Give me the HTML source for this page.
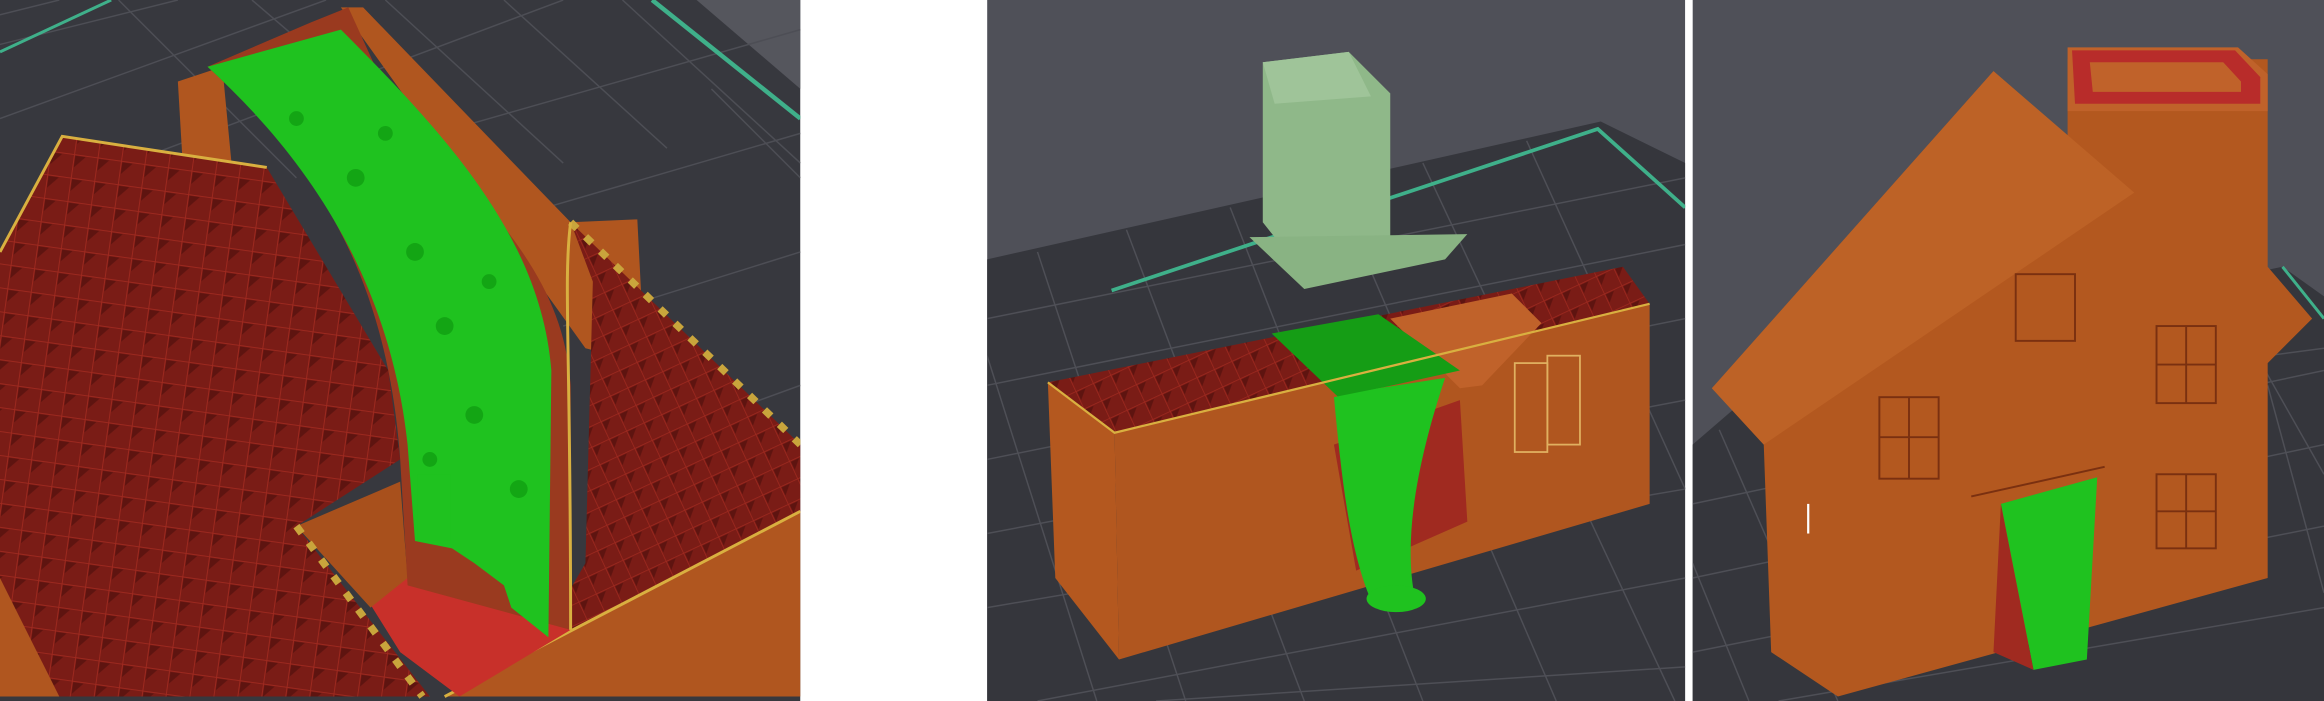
<!DOCTYPE html>
<html><head><meta charset="utf-8"><style>
html,body{margin:0;padding:0;background:#fff;}
svg{display:block;}
</style></head><body>
<svg width="2324" height="701" viewBox="0 0 1568 473" preserveAspectRatio="none" xmlns="http://www.w3.org/2000/svg">
<defs>
<clipPath id="c1"><rect x="0" y="0" width="540" height="473"/></clipPath>
<clipPath id="c2"><rect x="666" y="0" width="471" height="473"/></clipPath>
<clipPath id="c3"><rect x="1142" y="0" width="426" height="473"/></clipPath>
<pattern id="cells" width="16" height="16" patternUnits="userSpaceOnUse" patternTransform="rotate(8)">
<rect width="16" height="16" fill="#7a1c16"/><path d="M0 0H16M0 0V16" stroke="#a02a20" stroke-width="1.2"/>
<path d="M1 1L8 1L1 9Z" fill="#5e1410"/></pattern>
<pattern id="cells2" width="13" height="13" patternUnits="userSpaceOnUse" patternTransform="rotate(-25)">
<rect width="13" height="13" fill="#7a1c16"/><path d="M0 0H13M0 0V13" stroke="#a02a20" stroke-width="1"/>
<path d="M1 1L7 1L1 7Z" fill="#5e1410"/></pattern>
</defs>
<rect width="1568" height="473" fill="#fff"/>
<!-- Panel 1 -->
<g clip-path="url(#c1)">
<rect x="0" y="0" width="540" height="473" fill="#37383e"/>
<polygon points="470,0 540,0 540,60" fill="#55565d"/>
<g stroke="#4d4e55" stroke-width="1">
<path d="M0 30L120 0M0 80L220 0M60 120L380 0M260 100L540 20M300 160L540 90M380 220L540 170M430 300L540 260M0 10L40 0"/>
<path d="M80 0L200 120M170 0L240 60M260 0L380 110M340 0L450 100M420 0L540 110M480 60L540 120"/>
</g>
<path d="M440 0L540 80" stroke="#3fb08a" stroke-width="3"/>
<path d="M0 35L75 0" stroke="#3fb08a" stroke-width="2"/>
<polygon points="120,55 150,45 160,150 125,140" fill="#b0561f"/>
<polygon points="230,5 245,5 385,150 430,148 435,245 395,235" fill="#b0561f"/>
<polygon points="0,170 42,92 180,113 262,250 270,310 200,355 290,470 0,470" fill="url(#cells)"/>
<polyline points="0,170 42,92 180,113" fill="none" stroke="#d9b040" stroke-width="2"/>
<polygon points="385,150 540,300 540,345 360,440 395,380 400,190" fill="url(#cells2)"/>
<path d="M385 150L540 300" stroke="#c9a53c" stroke-width="5" stroke-dasharray="6 8"/>
<polygon points="540,345 300,470 540,470" fill="#b0561f"/>
<path d="M540 345L300 470" stroke="#d9b040" stroke-width="2"/>
<polygon points="0,390 40,470 0,470" fill="#b0561f"/>
<polygon points="245,400 300,380 345,400 385,425 310,470 270,440" fill="#c8302a"/>
<polygon points="200,355 270,325 275,390 250,410" fill="#a8501c"/>
<path d="M200 355L285 470" stroke="#c9a53c" stroke-width="5" stroke-dasharray="6 8"/>
<path d="M140 45 C200 100 260 170 270 310 L275 395 L385 425 L385 260 C380 190 340 150 260 60 L235 5 L210 15 Z" fill="#9a3a1f"/>
<path d="M140 45 L230 20 C300 90 365 160 372 250 L370 430 L345 410 L340 395 L320 380 L305 370 L280 365 L275 300 C262 180 200 100 140 45 Z" fill="#1fc21f"/>
<g fill="#0e9a10" opacity="0.7">
<circle cx="200" cy="80" r="5"/><circle cx="240" cy="120" r="6"/><circle cx="280" cy="170" r="6"/><circle cx="300" cy="220" r="6"/><circle cx="320" cy="280" r="6"/><circle cx="350" cy="330" r="6"/><circle cx="290" cy="310" r="5"/><circle cx="260" cy="90" r="5"/><circle cx="330" cy="190" r="5"/>
</g>
<rect x="282" y="320" width="22" height="45" fill="#1fc21f"/>
<path d="M385 150 C380 190 385 230 385 425" stroke="#d9b040" stroke-width="2" fill="none"/>
</g>
<!-- Panel 2 -->
<g clip-path="url(#c2)">
<rect x="666" y="0" width="471" height="473" fill="#4f5058"/>
<polygon points="666,175 1080,82 1137,110 1137,473 666,473" fill="#35363c"/>
<g stroke="#4e4f56" stroke-width="1">
<path d="M666 215L1137 120M666 260L1137 165M666 310L1137 215M666 360L1137 270M666 410L1137 330M700 473L1137 390M780 473L1137 450"/>
<path d="M700 170L800 473M760 155L880 473M830 140L960 473M900 125L1050 473M960 110L1130 473M1030 95L1137 330M666 240L740 473"/>
</g>
<path d="M750 196L1078 87L1137 140" stroke="#3fb08a" stroke-width="2.5" fill="none"/>
<polygon points="852,42 910,35 938,63 938,160 860,160 852,150" fill="#8fb889"/>
<polygon points="852,42 910,35 925,65 860,70" fill="#9fc499"/>
<polygon points="843,160 990,158 975,175 880,195" fill="#89b383"/>
<polygon points="707,258 1095,180 1113,205 752,292" fill="url(#cells2)"/>
<polygon points="707,258 752,292 755,445 712,390" fill="#b4581f"/>
<polygon points="752,292 1113,205 1113,340 755,445" fill="#b0561f"/>
<polygon points="938,215 1020,198 1040,218 1000,260 985,262" fill="#c0622a"/>
<polygon points="900,300 985,270 990,352 915,385" fill="#a02a20"/>
<polygon points="858,225 930,212 985,250 903,268" fill="#159d15"/>
<path d="M900 268 C905 320 910 370 925 405 L955 405 C945 360 960 300 975 255 L930 262 Z" fill="#1fc21f"/>
<ellipse cx="942" cy="404" rx="20" ry="9" fill="#1fc21f"/>
<path d="M707 258L752 292L1113 205" stroke="#d9b040" stroke-width="1.5" fill="none"/>
<g stroke="#e0b060" stroke-width="1.2" fill="none">
<rect x="1022" y="245" width="22" height="60"/><rect x="1044" y="240" width="22" height="60"/>
</g>
</g>
<!-- Panel 3 -->
<g clip-path="url(#c3)">
<rect x="1142" y="0" width="426" height="473" fill="#4f5058"/>
<polygon points="1142,300 1200,250 1540,180 1568,200 1568,473 1142,473" fill="#35363c"/>
<g stroke="#4e4f56" stroke-width="1">
<path d="M1142 340L1568 250M1142 390L1568 300M1142 440L1568 355M1200 473L1568 410M1530 240L1568 235"/>
<path d="M1160 290L1240 473M1500 200L1568 320M1530 260L1568 400M1142 380L1180 473"/>
</g>
<path d="M1540 180L1568 215" stroke="#3fb08a" stroke-width="2"/>
<polygon points="1155,262 1345,48 1395,92 1395,40 1530,40 1530,180 1560,215 1530,245 1530,390 1240,470 1195,440 1190,300" fill="#b3581f"/>
<polygon points="1155,262 1345,48 1440,130 1190,300" fill="#bd6226"/>
<polygon points="1395,32 1510,32 1530,50 1530,75 1395,75" fill="#c0622a"/>
<polygon points="1398,34 1508,34 1525,52 1525,70 1400,70" fill="#b82c2a"/>
<polygon points="1410,42 1500,42 1512,55 1512,62 1412,62" fill="#c0622a"/>
<polygon points="1350,340 1415,322 1408,445 1372,452" fill="#1fc21f"/>
<polygon points="1350,340 1372,452 1345,440" fill="#a02a20"/>
<g stroke="#7a3010" stroke-width="1.3" fill="none">
<rect x="1268" y="268" width="40" height="55"/><path d="M1288 268V323M1268 295H1308"/>
<rect x="1455" y="220" width="40" height="52"/><path d="M1475 220V272M1455 246H1495"/>
<rect x="1455" y="320" width="40" height="50"/><path d="M1475 320V370M1455 345H1495"/>
<rect x="1360" y="185" width="40" height="45"/>
<path d="M1330 335L1420 315"/>
</g>
<path d="M1220 340V360" stroke="#fff" stroke-width="1.5"/>
</g>
</svg>
</body></html>
